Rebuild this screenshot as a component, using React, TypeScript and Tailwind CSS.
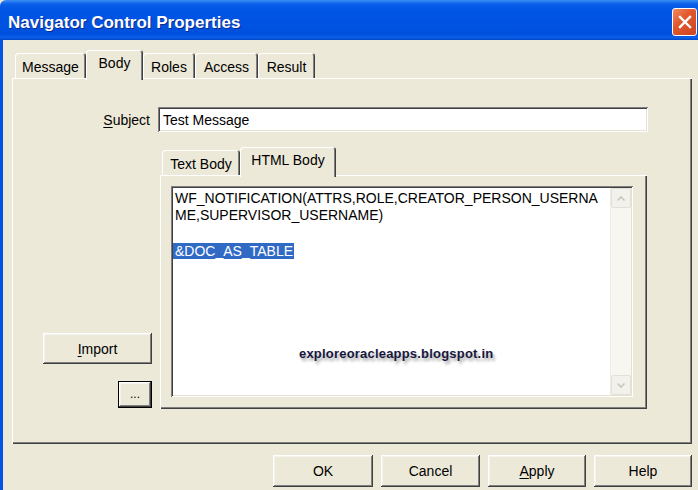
import React from "react";

const raised =
  "shadow-[inset_-1px_-1px_#404040,inset_1px_1px_#ffffff,inset_-2px_-2px_#808080,inset_2px_2px_#f4f3ee]";
const sunken =
  "shadow-[inset_1px_1px_#808080,inset_-1px_-1px_#ffffff,inset_2px_2px_#404040,inset_-2px_-2px_#e4e1d3]";
const panelBorder =
  "shadow-[inset_1px_1px_#ffffff,inset_-1px_-1px_#404040,inset_-2px_-2px_#808080]";
const tabBorder =
  "shadow-[inset_1px_1px_#ffffff,inset_-1px_0_#404040,inset_-2px_0_#808080]";

function Tab({ label, width, selected }: { label: string; width: number; selected?: boolean }) {
  if (selected) {
    return (
      <div
        className={`relative z-10 h-[30px] -mb-[2px] flex items-center justify-center pb-[4px] bg-[#ECE9D8] rounded-t-[3px] ${tabBorder}`}
        style={{ width }}
      >
        {label}
      </div>
    );
  }
  return (
    <div
      className={`h-[25px] flex items-center justify-center pt-[3px] bg-[#ECE9D8] rounded-t-[3px] ${tabBorder}`}
      style={{ width }}
    >
      {label}
    </div>
  );
}

function Button({ children, w, h, def }: { children: React.ReactNode; w: number; h: number; def?: boolean }) {
  return (
    <div
      className={`flex items-center justify-center bg-[#ECE9D8] ${raised} ${def ? "border border-black" : ""}`}
      style={{ width: w, height: h }}
    >
      {children}
    </div>
  );
}

function Chevron({ up }: { up?: boolean }) {
  return (
    <svg width="10" height="7" viewBox="0 0 10 7">
      <path
        d={up ? "M1.5 5.5 L5 2 L8.5 5.5" : "M1.5 1.5 L5 5 L8.5 1.5"}
        fill="none"
        stroke="#c9c7b9"
        strokeWidth="1.7"
      />
    </svg>
  );
}

export default function App() {
  return (
    <div className="w-[698px] h-[490px] bg-[#ECE9D8] flex flex-col overflow-hidden font-['Liberation_Sans',Arial,sans-serif] text-[14px] text-black leading-none select-none">
      {/* title bar */}
      <div className="h-[40px] shrink-0 flex items-center justify-between rounded-tl-[6px] bg-[linear-gradient(180deg,#3d8ef5_0%,#0a5fea_10%,#0055e5_25%,#0052e1_65%,#0050dd_85%,#0a5ee8_94%,#0046c6_100%)]">
        <div className="pl-[8px] pt-[5px] text-[17px] font-bold text-white [text-shadow:1px_1px_0_#0b2a8a]">
          Navigator Control Properties
        </div>
        <div className="mr-[1px] mt-[4px] w-[25px] h-[28px] rounded-[3px] border border-white bg-[linear-gradient(135deg,#f08a63_0%,#e2582d_40%,#cc4420_100%)] flex items-center justify-center">
          <svg width="14" height="14" viewBox="0 0 14 14">
            <path d="M2 2 L12 12 M12 2 L2 12" stroke="white" strokeWidth="2.4" strokeLinecap="square" />
          </svg>
        </div>
      </div>

      <div className="flex-1 flex flex-col border-l-[3px] border-l-[#0054E3]">
        {/* main tabs */}
        <div className="mt-[10px] h-[28px] flex items-end pl-[12px]">
          <Tab label="Message" width={71} />
          <Tab label="Body" width={57} selected />
          <Tab label="Roles" width={52} />
          <Tab label="Access" width={63} />
          <Tab label="Result" width={57} />
        </div>

        {/* tab panel */}
        <div className={`ml-[9px] w-[680px] h-[366px] shrink-0 flex flex-col bg-[#ECE9D8] ${panelBorder}`}>
          <div className="pt-[29px] flex items-center">
            <div className="w-[138px] text-right">
              <span className="underline underline-offset-2">S</span>ubject
            </div>
            <div className={`ml-[8px] w-[490px] h-[25px] bg-white flex items-center pl-[5px] pt-[1px] ${sunken}`}>
              Test Message
            </div>
          </div>

          <div className="mt-[14px] flex">
            <div className="w-[140px] flex flex-col items-end justify-end gap-[17px] pb-[1px]">
              <Button w={109} h={31}>
                <span>
                  <span className="underline underline-offset-2">I</span>mport
                </span>
              </Button>
              <Button w={34} h={27} def>
                <span className="text-[12px] pb-[2px]">...</span>
              </Button>
            </div>

            <div className="ml-[8px] w-[487px] flex flex-col">
              <div className="h-[29px] flex items-end pl-[2px]">
                <Tab label="Text Body" width={78} />
                <Tab label="HTML Body" width={96} selected />
              </div>
              <div className={`h-[234px] pt-[11px] pl-[11px] bg-[#ECE9D8] ${panelBorder}`}>
                <div className={`w-[462px] h-[211px] bg-white flex p-[2px] ${sunken}`}>
                  <div className="relative flex-1 pl-[2px] pt-[2px] leading-[17px] whitespace-nowrap">
                    <div>WF_NOTIFICATION(ATTRS,ROLE,CREATOR_PERSON_USERNA</div>
                    <div>ME,SUPERVISOR_USERNAME)</div>
                    <div className="h-[19px]" />
                    <div>
                      <span className="bg-[#316AC5] text-white -ml-[2px] pl-[2px] pr-[1px]">&amp;DOC_AS_TABLE</span>
                    </div>
                    <div className="absolute left-[126px] top-[159px] text-[13px] font-bold tracking-[0.2px] text-[#17173d] leading-none [text-shadow:2px_3px_3px_rgba(0,0,0,0.35)]">
                      exploreoracleapps.blogspot.in
                    </div>
                  </div>
                  <div className="w-[21px] flex flex-col bg-[#F7F6F1] border-l border-l-[#efeee6]">
                    <div className="h-[20px] rounded-[2px] border border-[#e3e1d5] bg-[#F2F1EB] flex items-center justify-center">
                      <Chevron up />
                    </div>
                    <div className="flex-1" />
                    <div className="h-[20px] rounded-[2px] border border-[#e3e1d5] bg-[#F2F1EB] flex items-center justify-center">
                      <Chevron />
                    </div>
                  </div>
                </div>
              </div>
            </div>
          </div>
        </div>

        {/* dialog buttons */}
        <div className="mt-[11px] flex justify-end gap-[8px] pr-[6px]">
          <Button w={100} h={32}>OK</Button>
          <Button w={99} h={32}>Cancel</Button>
          <Button w={98} h={32}>
            <span>
              <span className="underline underline-offset-2">A</span>pply
            </span>
          </Button>
          <Button w={98} h={32}>Help</Button>
        </div>
      </div>
    </div>
  );
}
